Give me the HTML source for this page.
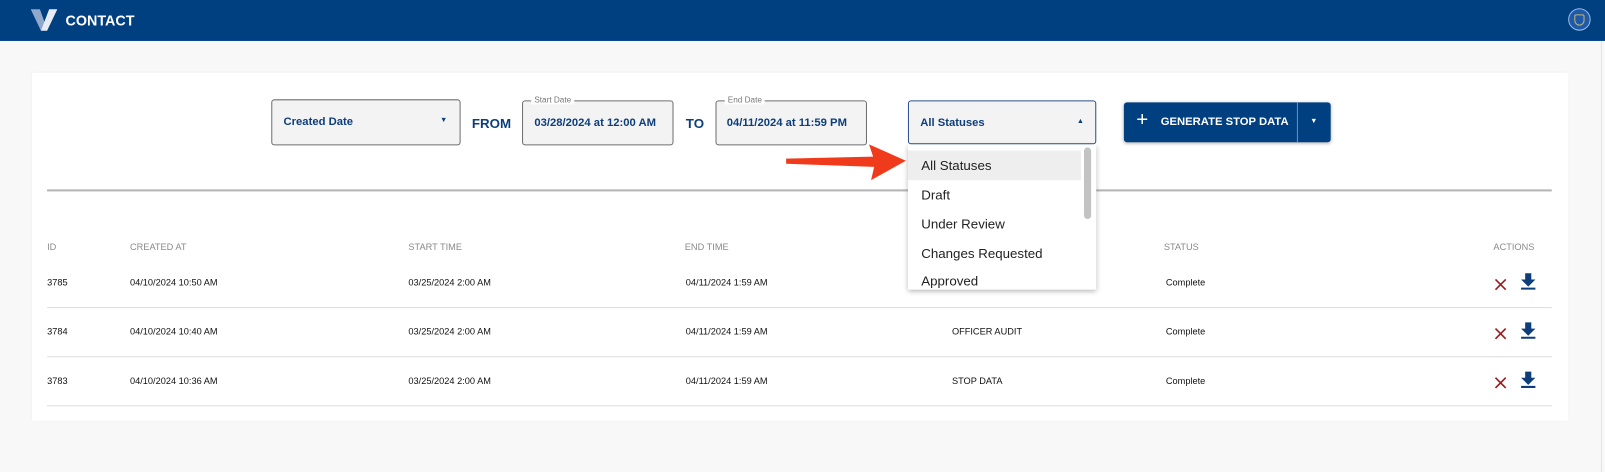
<!DOCTYPE html>
<html><head><style>
*{margin:0;padding:0;box-sizing:border-box}
body{width:1605px;height:461px;background:#f8f8f8;font-family:"Liberation Sans",sans-serif;position:relative;overflow:hidden}
#w{position:absolute;left:0;top:0;width:1568px;height:450px;transform:scale(1.0236);transform-origin:0 0}
.top{position:absolute;left:0;top:0;width:1568px;height:40px;background:#003f80}
.abs{position:absolute}
.card{position:absolute;left:31px;top:71px;width:1501px;height:340px;background:#fff;box-shadow:0 0 2px rgba(0,0,0,.08)}
.field{position:absolute;background:#f3f3f3;border:1px solid #6f6f6f;border-radius:3px;color:#0d3e7a;font-weight:bold;font-size:11px}
.lbl{position:absolute;color:#0d3e7a;font-weight:bold;font-size:13px}
.th{position:absolute;top:236px;font-size:9px;color:#8a8a8a}
.td{position:absolute;font-size:9px;color:#111}
.sep{position:absolute;left:46px;width:1470px;height:1px;background:#ddd}
.opt{position:absolute;left:900px;font-size:13px;color:#222}
</style></head><body><div id="w">
<div class="top">
<svg class="abs" style="left:30px;top:8px" width="26" height="23" viewBox="0 0 26 23"><polygon points="0,1 9,1 14,15 10,22" fill="#8fa8cc"/><polygon points="10,22 18,1 26,1 16,22" fill="#e8edf5"/></svg>
<div class="abs" style="left:64px;top:12px;color:#fff;font-size:14px;font-weight:bold">CONTACT</div>
<div class="abs" style="left:1532px;top:8px;width:22px;height:22px;border-radius:50%;background:#1e5aa8;border:1.5px solid #9bbce8"><div style="margin:5px auto;width:10px;height:11px;border:1px solid #c8b46a;border-radius:2px 2px 5px 5px"></div></div>
</div>
<div class="abs" style="left:1564px;top:40px;width:1px;height:421px;background:#e4e4e4"></div>
<div class="card"></div>
<div class="field" style="left:265px;top:97px;width:185px;height:45px"><span class="abs" style="left:11px;top:15px">Created Date</span><span class="abs" style="left:164px;top:16px;font-size:7px">▼</span></div>
<div class="lbl" style="left:461px;top:113px">FROM</div>
<div class="field" style="left:510px;top:98px;width:148px;height:44px"><span class="abs" style="left:11px;top:15px">03/28/2024 at 12:00 AM</span><span class="abs" style="left:8px;top:-6px;background:#fff;padding:0 3px;font-size:8px;font-weight:normal;color:#777">Start Date</span></div>
<div class="lbl" style="left:670px;top:113px">TO</div>
<div class="field" style="left:699px;top:98px;width:148px;height:44px"><span class="abs" style="left:10px;top:15px">04/11/2024 at 11:59 PM</span><span class="abs" style="left:8px;top:-6px;background:#fff;padding:0 3px;font-size:8px;font-weight:normal;color:#777">End Date</span></div>
<div class="field" style="left:887px;top:98px;width:184px;height:43px;border-color:#2b4f8c"><span class="abs" style="left:11px;top:15px">All Statuses</span><span class="abs" style="left:164px;top:16px;font-size:7px">▲</span></div>
<div class="abs" style="left:1098px;top:100px;width:202px;height:39px;background:#003f80;border-radius:3px;box-shadow:0 1px 3px rgba(0,0,0,.3)"><span class="abs" style="left:12px;top:7px;color:#fff;font-size:20px;line-height:20px">+</span><span class="abs" style="left:36px;top:13px;color:#fff;font-size:11px;font-weight:bold">GENERATE STOP DATA</span><div class="abs" style="left:169px;top:0;width:1px;height:39px;background:#6d8fbd"></div><span class="abs" style="left:182px;top:15px;color:#fff;font-size:7px">▼</span></div>
<div class="abs" style="left:46px;top:185px;width:1470px;height:2px;background:#b5b5b5"></div>
<div class="th" style="left:46px">ID</div><div class="th" style="left:127px">CREATED AT</div><div class="th" style="left:399px">START TIME</div><div class="th" style="left:669px">END TIME</div><div class="th" style="left:1137px">STATUS</div><div class="th" style="left:1459px">ACTIONS</div>
<div class="td" style="left:46px;top:271px">3785</div><div class="td" style="left:127px;top:271px">04/10/2024 10:50 AM</div><div class="td" style="left:399px;top:271px">03/25/2024 2:00 AM</div><div class="td" style="left:670px;top:271px">04/11/2024 1:59 AM</div><div class="td" style="left:1139px;top:271px">Complete</div>
<div class="sep" style="top:300px"></div>
<div class="td" style="left:46px;top:319px">3784</div><div class="td" style="left:127px;top:319px">04/10/2024 10:40 AM</div><div class="td" style="left:399px;top:319px">03/25/2024 2:00 AM</div><div class="td" style="left:670px;top:319px">04/11/2024 1:59 AM</div><div class="td" style="left:930px;top:319px">OFFICER AUDIT</div><div class="td" style="left:1139px;top:319px">Complete</div>
<div class="sep" style="top:348px"></div>
<div class="td" style="left:46px;top:367px">3783</div><div class="td" style="left:127px;top:367px">04/10/2024 10:36 AM</div><div class="td" style="left:399px;top:367px">03/25/2024 2:00 AM</div><div class="td" style="left:670px;top:367px">04/11/2024 1:59 AM</div><div class="td" style="left:930px;top:367px">STOP DATA</div><div class="td" style="left:1139px;top:367px">Complete</div>
<div class="sep" style="top:396px"></div>
<svg class="abs" style="left:1455px;top:262px" width="50" height="120">
<g stroke="#9a1c1c" stroke-width="1.6"><path d="M6 11l10 10M16 11L6 21"/><path d="M6 59l10 10M16 59L6 69"/><path d="M6 107l10 10M16 107L6 117"/></g>
<g fill="#0d3e7a"><path d="M35 5h6v6h4l-7 7-7-7h4z M31 19h14v2H31z"/><path d="M35 53h6v6h4l-7 7-7-7h4z M31 67h14v2H31z"/><path d="M35 101h6v6h4l-7 7-7-7h4z M31 115h14v2H31z"/></g></svg>
<div class="abs" style="left:887px;top:141px;width:184px;height:142px;background:#fff;box-shadow:0 2px 5px rgba(0,0,0,.3);overflow:hidden">
<div class="abs" style="left:0;top:6px;width:169px;height:29px;background:#eee"></div>
<div class="abs" style="left:172px;top:3px;width:7px;height:70px;background:#c3c3c3;border-radius:4px"></div>
</div>
<div class="opt" style="top:154px">All Statuses</div>
<div class="opt" style="top:183px">Draft</div>
<div class="opt" style="top:211px">Under Review</div>
<div class="opt" style="top:240px">Changes Requested</div>
<div class="opt" style="top:267px">Approved</div>
<svg class="abs" style="left:765px;top:138px" width="122" height="42"><polygon points="3,17 88,15 84,3 120,19 86,38 89,25 3,22" fill="#f03a1c"/></svg>
</div></body></html>
